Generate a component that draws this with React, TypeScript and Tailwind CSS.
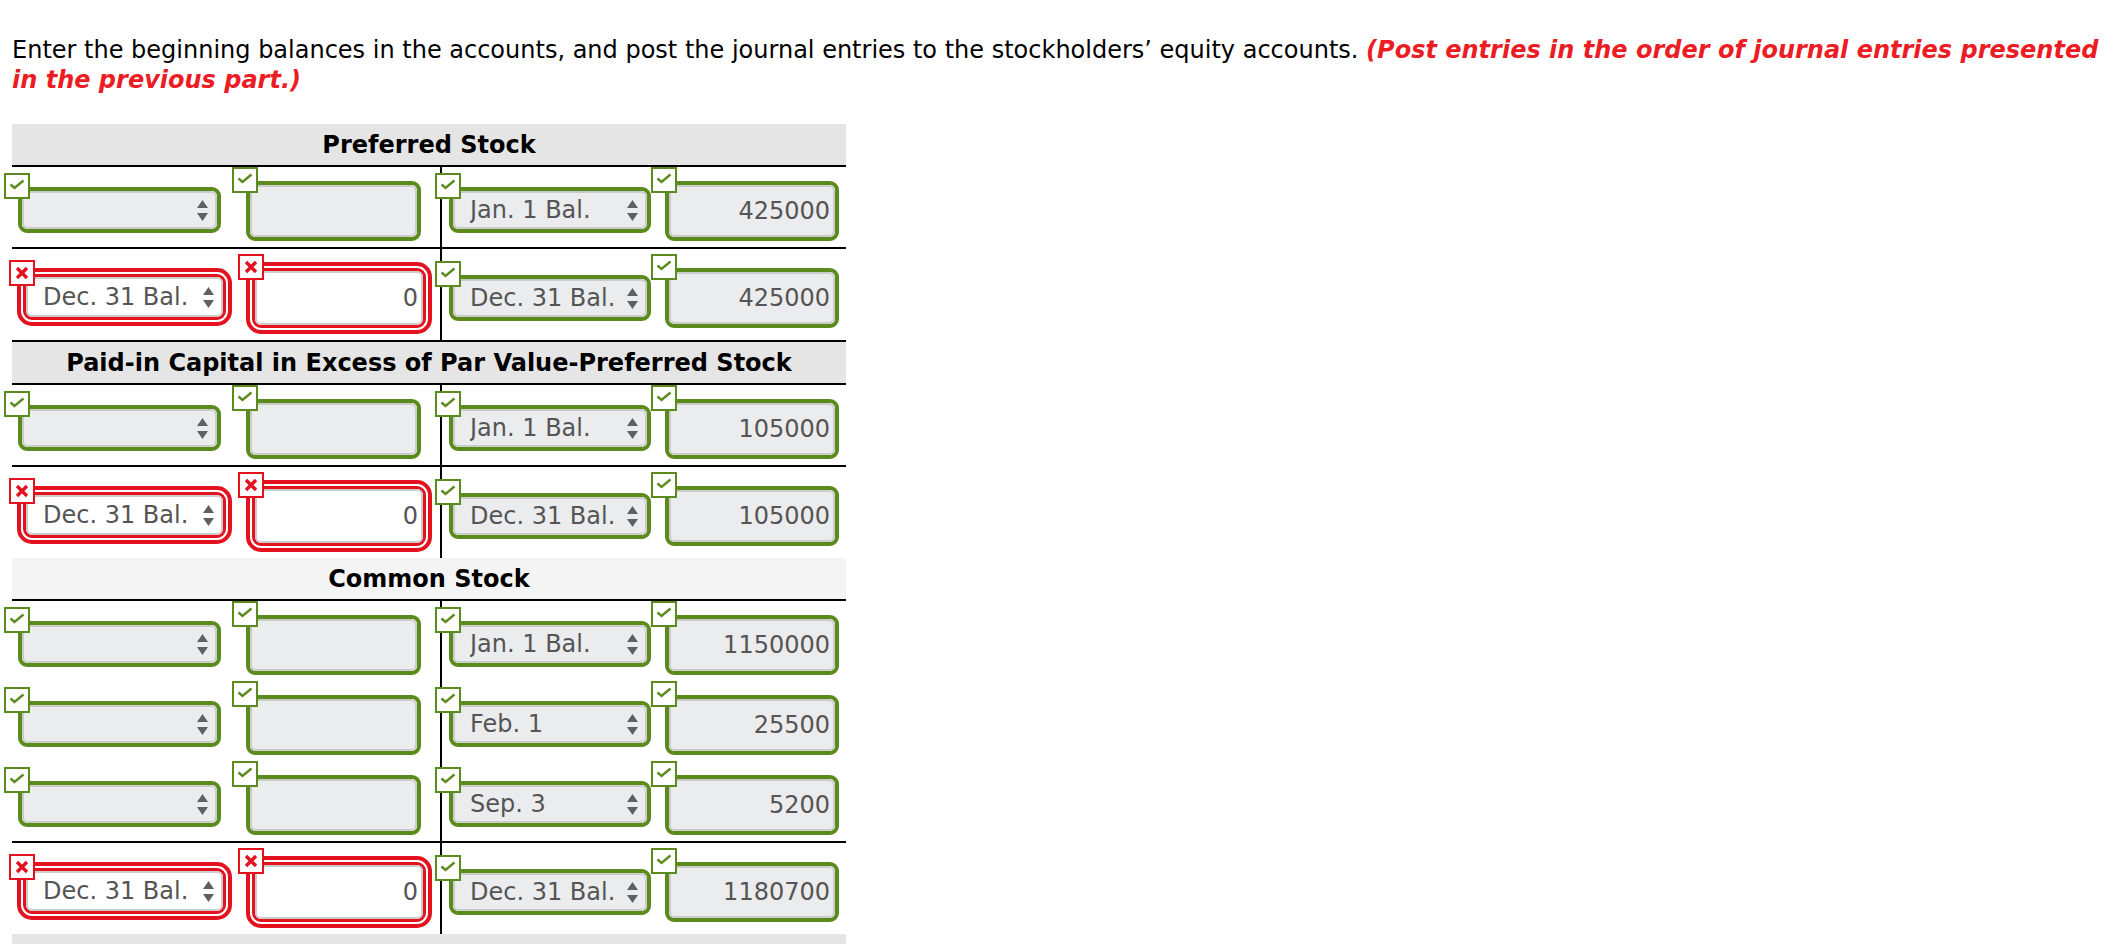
import React from "react";

type FieldProps = {
  value?: string;
  bad?: boolean;
  className?: string;
};

function Badge({ bad }: { bad?: boolean }) {
  return (
    <span
      className={`absolute -left-[14px] -top-[14px] z-10 h-[26px] w-[26px] border-2 bg-white ${
        bad ? "border-[#e4121f]" : "border-[#5b8a1d]"
      }`}
    >
      {bad ? (
        <svg viewBox="0 0 22 22" className="h-[22px] w-[22px]">
          <path d="M6 6 L16 16 M16 6 L6 16" stroke="#e4121f" strokeWidth="3.4" fill="none" />
        </svg>
      ) : (
        <svg viewBox="0 0 22 22" className="h-[22px] w-[22px]">
          <path d="M4.5 9.5 L8.5 13 L17.5 5.5" stroke="#5b8a1d" strokeWidth="2.4" fill="none" />
        </svg>
      )}
    </span>
  );
}

function Arrows() {
  return (
    <svg viewBox="0 0 11 21" className="h-[21px] w-[11px] shrink-0">
      <path d="M5.5 0 L11 8 L0 8 Z" fill="#5f6063" />
      <path d="M0 13 L11 13 L5.5 21 Z" fill="#5f6063" />
    </svg>
  );
}

function SelectBox({ value = "", bad, className = "" }: FieldProps) {
  return (
    <div className={`relative h-[46px] ${className}`}>
      <Badge bad={bad} />
      <div
        className={`h-full rounded-[9px] ${
          bad
            ? "border-[3px] border-[#e4121f] outline-4 outline-solid outline-offset-2 outline-[#e4121f]"
            : "border-4 border-[#5b8a1d]"
        }`}
      >
        <div
          className={`flex h-full items-center rounded-[6px] border-2 border-[#cbcbcb] pl-[15px] pr-[7px] ${
            bad ? "bg-white" : "bg-[#ebecee]"
          }`}
        >
          <span className="flex-1 overflow-hidden whitespace-nowrap text-[#555555]">{value}</span>
          <Arrows />
        </div>
      </div>
    </div>
  );
}

function InputBox({ value = "", bad, className = "" }: FieldProps) {
  return (
    <div className={`relative h-[60px] ${className}`}>
      <Badge bad={bad} />
      <div
        className={`h-full rounded-[9px] ${
          bad
            ? "border-[3px] border-[#e4121f] outline-4 outline-solid outline-offset-2 outline-[#e4121f]"
            : "border-4 border-[#5b8a1d]"
        }`}
      >
        <div
          className={`flex h-full items-center justify-end rounded-[6px] border-2 border-[#cbcbcb] pr-[3px] text-[#555555] ${
            bad ? "bg-white" : "bg-[#ebecee]"
          }`}
        >
          {value}
        </div>
      </div>
    </div>
  );
}

function Header({ title, light }: { title: string; light?: boolean }) {
  return (
    <div
      className={`flex h-[43px] items-center justify-center border-b-2 border-black font-bold text-black ${
        light ? "bg-[#f4f4f4]" : "bg-[#e5e5e5]"
      }`}
    >
      {title}
    </div>
  );
}

// ordinary posting row: empty left side, dated amount on the right
function EntryRow({ date, amount, line }: { date: string; amount: string; line?: boolean }) {
  return (
    <div className={`flex ${line ? "border-b-2 border-black" : ""}`}>
      <div className="flex w-[430px] items-start border-r-2 border-black pb-[6px] pt-[14px]">
        <SelectBox className="ml-[6px] mt-[6px] w-[203px]" />
        <InputBox className="ml-[25px] w-[175px]" />
      </div>
      <div className="flex flex-1 items-start pb-[6px] pt-[14px]">
        <SelectBox className="ml-[7px] mt-[6px] w-[202px]" value={date} />
        <InputBox className="ml-[14px] w-[174px]" value={amount} />
      </div>
    </div>
  );
}

function BalanceRow({ amount, line = true }: { amount: string; line?: boolean }) {
  return (
    <div className={`flex ${line ? "border-b-2 border-black" : ""}`}>
      <div className="flex w-[430px] items-start border-r-2 border-black pb-[12px] pt-[19px]">
        <SelectBox bad className="ml-[11px] mt-[6px] w-[203px]" value="Dec. 31 Bal." />
        <InputBox bad className="ml-[26px] w-[174px]" value="0" />
      </div>
      <div className="flex flex-1 items-start pb-[12px] pt-[19px]">
        <SelectBox className="ml-[7px] mt-[7px] w-[202px]" value="Dec. 31 Bal." />
        <InputBox className="ml-[14px] w-[174px]" value={amount} />
      </div>
    </div>
  );
}

export default function App() {
  return (
    <div className="h-[944px] w-[2114px] overflow-hidden bg-white font-['DejaVu_Sans','Verdana',sans-serif] text-[24px] text-black">
      <p className="pl-[12px] pt-[35px] leading-[30px]">
        Enter the beginning balances in the accounts, and post the journal entries to the stockholders’ equity
        accounts.{" "}
        <span className="font-bold italic text-[#ec1c24]">
          (Post entries in the order of journal entries presented in the previous part.)
        </span>
      </p>

      <div className="ml-[12px] mt-[29px] w-[834px]">
        <Header title="Preferred Stock" />
        <EntryRow date="Jan. 1 Bal." amount="425000" line />
        <BalanceRow amount="425000" />

        <Header title="Paid-in Capital in Excess of Par Value-Preferred Stock" />
        <EntryRow date="Jan. 1 Bal." amount="105000" line />
        <BalanceRow amount="105000" line={false} />

        <Header title="Common Stock" light />
        <EntryRow date="Jan. 1 Bal." amount="1150000" />
        <EntryRow date="Feb. 1" amount="25500" />
        <EntryRow date="Sep. 3" amount="5200" line />
        <BalanceRow amount="1180700" line={false} />

        <div className="h-[43px] bg-[#e5e5e5]" />
      </div>
    </div>
  );
}
